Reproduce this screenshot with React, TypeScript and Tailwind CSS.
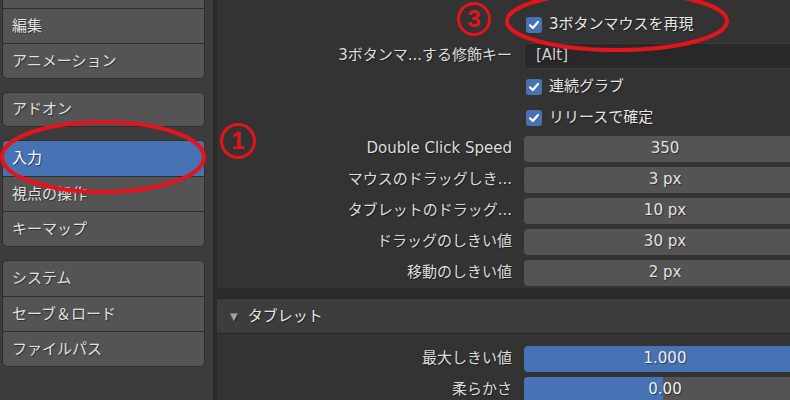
import React from "react";

const navGroups = [
  [{ label: "" }, { label: "編集" }, { label: "アニメーション" }],
  [{ label: "アドオン" }],
  [{ label: "入力", active: true }, { label: "視点の操作" }, { label: "キーマップ" }],
  [{ label: "システム" }, { label: "セーブ＆ロード" }, { label: "ファイルパス" }],
];

const Check = () => (
  <div className="w-[16px] h-[16px] rounded-[3px] bg-[#4772b3] flex items-center justify-center shrink-0">
    <svg width="12" height="12" viewBox="0 0 12 12">
      <path d="M2 6.3 L4.8 9 L10 3" fill="none" stroke="#ffffff" strokeWidth="2.2" strokeLinecap="round" strokeLinejoin="round" />
    </svg>
  </div>
);

const Row = ({ label, children }: any) => (
  <div className="h-[31px] flex items-center shrink-0">
    <div className="w-[295px] shrink-0 text-right text-[#dcdcdc] whitespace-nowrap">{label}</div>
    <div className="ml-[12px] flex items-center">{children}</div>
  </div>
);

const NumField = ({ value }: any) => (
  <div className="w-[282px] h-[26px] shrink-0 rounded-[4px] bg-[#545454] flex items-center justify-center text-[#e2e2e2]">
    {value}
  </div>
);

const CheckRow = ({ label }: any) => (
  <Row label="">
    <div className="flex items-center gap-[7px] pl-[2px] text-[#e6e6e6] whitespace-nowrap">
      <Check />
      <span>{label}</span>
    </div>
  </Row>
);

export default function App() {
  return (
    <div className="relative w-[790px] h-[400px] overflow-hidden flex bg-[#3c3c3c] text-[15px] font-['DejaVu_Sans','Noto_Sans_CJK_JP',sans-serif] [text-shadow:1px_1px_1px_rgba(0,0,0,0.45)]">
      {/* sidebar */}
      <div className="w-[213px] shrink-0 pl-[2px] pr-[8px] flex flex-col gap-[13px] mt-[-28px]">
        {navGroups.map((group, gi) => (
          <div key={gi} className="rounded-[5px] overflow-hidden border border-[#2e2e2e] bg-[#545454] flex flex-col">
            {group.map((item: any, i) => (
              <div
                key={i}
                className={`${gi === 1 ? "h-[33px]" : "h-[35px]"} flex items-center pl-[9px] ${
                  i > 0 ? "border-t border-[#2e2e2e]" : ""
                } ${item.active ? "bg-[#4772b3] text-white" : "text-[#e0e0e0]"}`}
              >
                {item.label}
              </div>
            ))}
          </div>
        ))}
      </div>

      {/* main */}
      <div className="flex-1 flex flex-col border-l-[4px] border-[#2a2a2a] bg-[#2a2a2a] overflow-hidden">
        <div className="bg-[#333333] flex flex-col pt-[9px] h-[288px]">
          <CheckRow label="3ボタンマウスを再現" />
          <Row label="3ボタンマ...する修飾キー">
            <div className="w-[282px] h-[26px] rounded-[4px] bg-[#282828] border border-[#3a3a3a] flex items-center pl-[11px] text-[#cfcfcf]">
              [Alt]
            </div>
          </Row>
          <CheckRow label="連続グラブ" />
          <CheckRow label="リリースで確定" />
          <Row label="Double Click Speed">
            <NumField value="350" />
          </Row>
          <Row label="マウスのドラッグしき...">
            <NumField value="3 px" />
          </Row>
          <Row label="タブレットのドラッグ...">
            <NumField value="10 px" />
          </Row>
          <Row label="ドラッグのしきい値">
            <NumField value="30 px" />
          </Row>
          <Row label="移動のしきい値">
            <NumField value="2 px" />
          </Row>
        </div>

        <div className="mt-[11px] h-[35px] shrink-0 bg-[#3d3d3d] border-b border-[#262626] flex items-center pl-[13px] text-[#e6e6e6]">
          <span className="text-[10px] text-[#a0a0a0] mr-[10px]">▼</span>
          タブレット
        </div>

        <div className="flex-1 bg-[#333333] flex flex-col pt-[9px]">
          <Row label="最大しきい値">
            <div className="w-[282px] h-[26px] rounded-[4px] bg-[#4772b3] flex items-center justify-center text-[#f0f0f0]">
              1.000
            </div>
          </Row>
          <Row label="柔らかさ">
            <div className="relative w-[282px] h-[26px] rounded-[4px] bg-[#545454] overflow-hidden flex items-center justify-center text-[#f0f0f0]">
              <div className="absolute left-0 top-0 bottom-0 w-[139px] bg-[#4772b3]" />
              <span className="relative">0.00</span>
            </div>
          </Row>
        </div>
      </div>

      {/* annotations */}
      <svg className="absolute inset-0 pointer-events-none" width="790" height="400">
        <ellipse cx="103" cy="157" rx="101" ry="35" fill="none" stroke="#e3141b" strokeWidth="4" />
        <ellipse cx="617" cy="21" rx="110" ry="29" fill="none" stroke="#e3141b" strokeWidth="4" />
      </svg>
      <div className="absolute left-[220px] top-[123px] w-[36px] h-[36px] rounded-full border-[3px] border-[#e3141b] flex items-center justify-center text-[#e3141b] font-bold text-[24px] leading-none [text-shadow:none] font-['Liberation_Sans',sans-serif]">
        1
      </div>
      <div className="absolute left-[457px] top-[2px] w-[34px] h-[34px] rounded-full border-[3px] border-[#e3141b] flex items-center justify-center text-[#e3141b] font-bold text-[24px] leading-none [text-shadow:none] font-['Liberation_Sans',sans-serif]">
        3
      </div>
    </div>
  );
}
